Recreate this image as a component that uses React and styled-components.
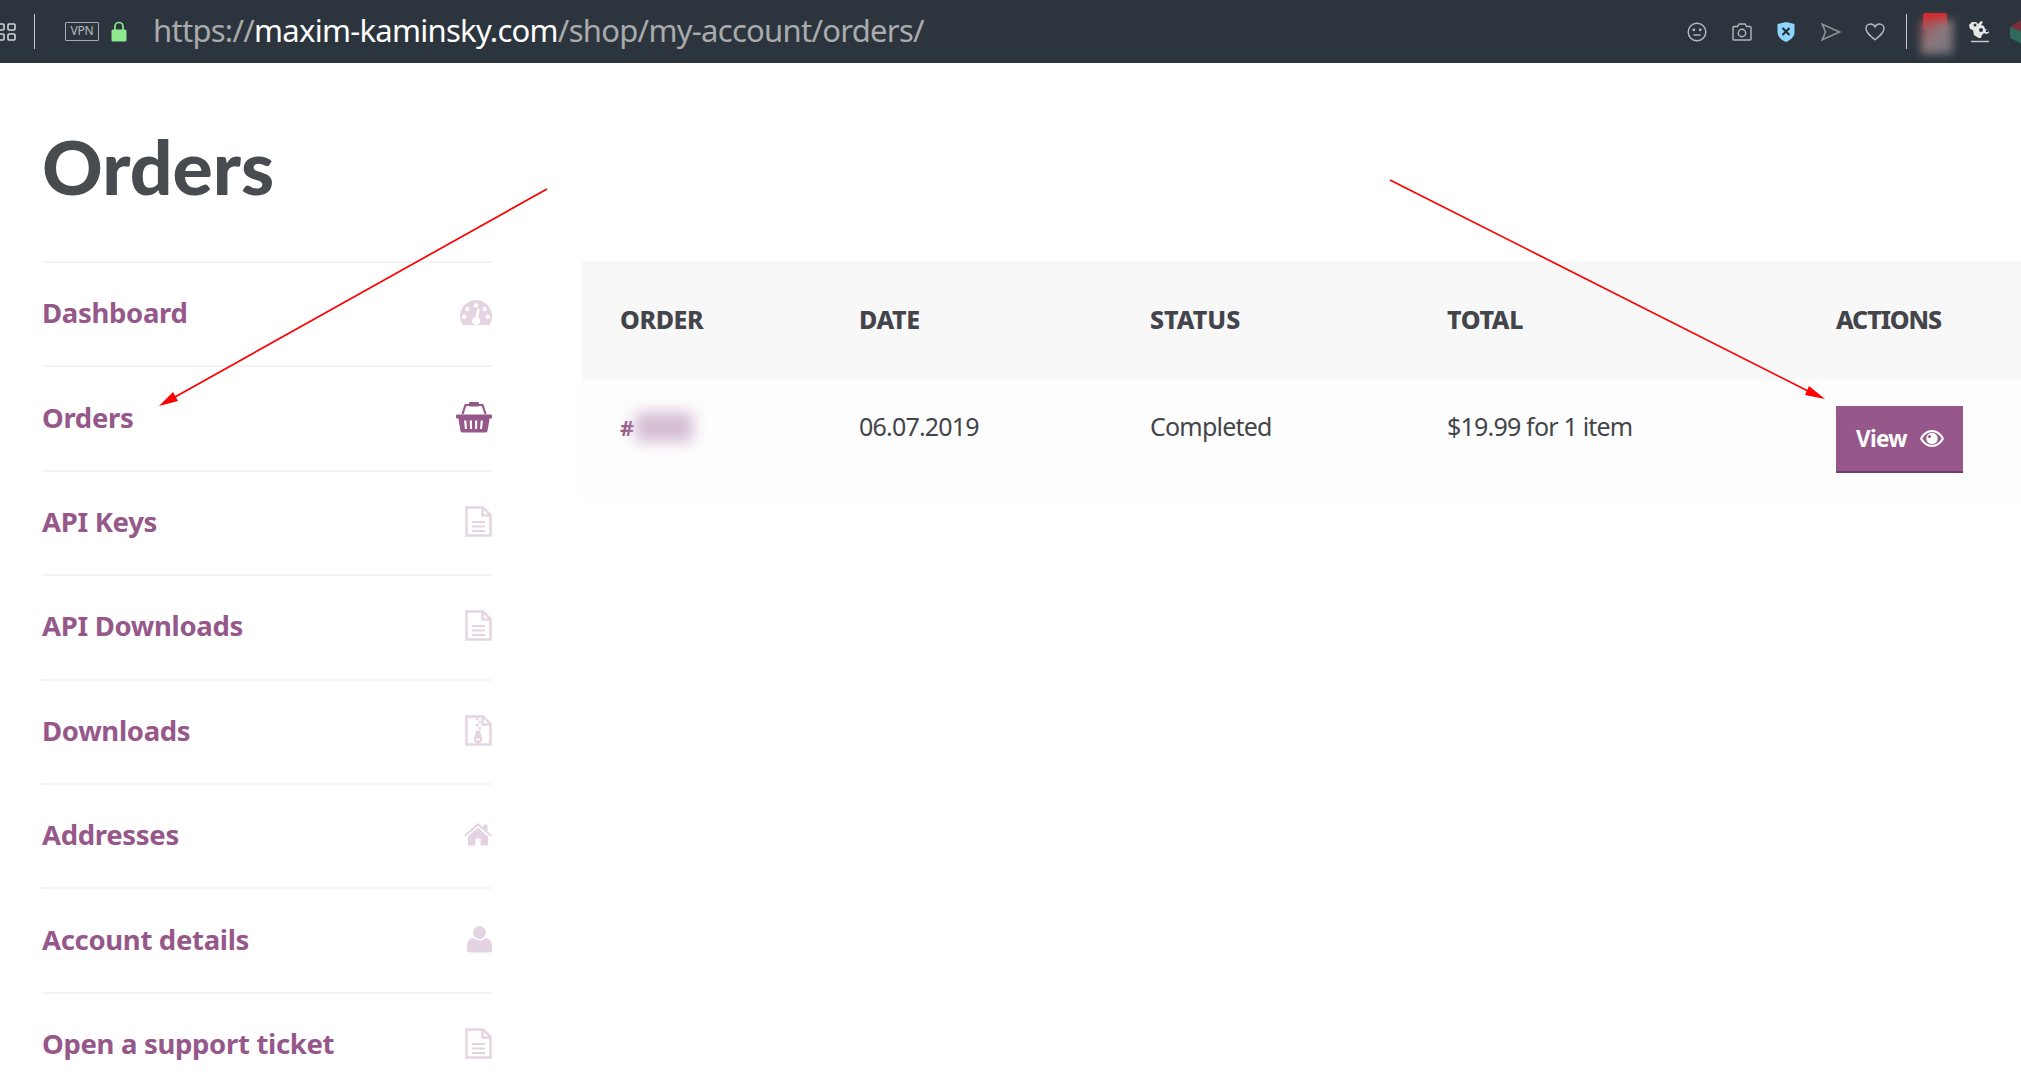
import React from "react";
import styled, { createGlobalStyle } from "styled-components";

const Global = createGlobalStyle`
  html, body { margin: 0; padding: 0; height: 1072px; overflow: hidden; background: #fff; }
  #root { position: relative; height: 1072px; overflow: hidden; }
  * { box-sizing: border-box; }
`;

const Toolbar = styled.header`
  height: 63px; background: #2c353e; display: flex; align-items: center; overflow: hidden;
`;
const LeftGroup = styled.div`
  display: flex; align-items: center; margin-left: -5px;
`;
const Divider = styled.span`
  width: 1px; height: 35px; background: #c8ccd0; flex: none; margin: ${p => p.$m || "0"};
`;
const Url = styled.div`
  font-family: "Noto Sans", sans-serif; font-size: 31px; letter-spacing: -0.72px; color: #a9abad;
  margin-left: 26px; white-space: nowrap; margin-top: -3px;
  b { font-weight: 400; color: #fff; }
`;
const RightGroup = styled.div`
  margin-left: auto; display: flex; align-items: center; margin-right: -21px;
`;
const Slot = styled.span`
  width: ${p => p.$w || 44.5}px; display: flex; justify-content: center; align-items: center; flex: none;
`;
const BlurBadge = styled.span`
  position: relative; width: 34px; height: 36px; display: block; margin: 0 3px 0 14px; flex: none;
`;
const RedTab = styled.span`
  position: absolute; left: 2px; top: -1px; width: 24px; height: 16px; background: #d8282a; border-radius: 2px;
`;
const GreyBlur = styled.span`
  position: absolute; left: 0; top: 6px; width: 32px; height: 34px; filter: blur(4px);
  background: linear-gradient(135deg, #a84a50 0%, #8a7a80 50%, #6e7076 100%);
`;

const Page = styled.main`
  padding: 0 0 0 42px;
`;
const Title = styled.h1`
  font-family: Lato, sans-serif; font-weight: 900; font-size: 75px; line-height: 90px; color: #484c51;
  margin: 0; height: 198px; padding-top: 58px;
`;
const Columns = styled.div`
  display: flex; gap: 90px; align-items: flex-start;
`;
const Nav = styled.nav`
  width: 450px; flex: none;
`;
const NavItem = styled.a`
  display: flex; align-items: center; justify-content: space-between; height: 104.4px;
  border-top: 2px solid #f3f3f3; padding-bottom: 3px;
  font-family: "Noto Sans", sans-serif; font-weight: 700; font-size: 27.5px; letter-spacing: -0.32px; color: #96588a;
  svg { opacity: ${p => (p.$active ? 1 : 0.25)}; display: block; }
`;
const TableWrap = styled.div`
  flex: 1; min-width: 0;
`;
const OrdersTable = styled.table`
  border-collapse: collapse; table-layout: fixed; width: 1439px;
  font-family: "Noto Sans", sans-serif; color: #43454b;
`;
const HeadCell = styled.th`
  background: #f8f8f8; height: 119px; padding: 0 0 3px 38px; text-align: left; width: ${p => p.$w}px;
  font-size: 25px; font-weight: 800; letter-spacing: ${p => p.$ls || "-0.4px"}; text-transform: uppercase;
`;
const BodyCell = styled.td`
  background: #fdfdfd; height: 118px; padding: 0 0 26px 38px; font-size: 25px; letter-spacing: -0.8px;
  vertical-align: middle; white-space: nowrap;
`;
const OrderLink = styled.span`
  color: #96588a; font-weight: 700; display: inline-flex; align-items: center; font-size: 22px;
`;
const Blurred = styled.span`
  display: inline-block; width: 58px; height: 30px; background: #d6bed5; filter: blur(7px); margin-left: 2px;
`;
const ActionCell = styled(BodyCell)`
  padding-bottom: 0; padding-top: 0;
`;
const ViewButton = styled.a`
  display: inline-flex; align-items: center; gap: 13px; width: 127px; height: 67px; background: #96588a;
  border-bottom: 2px solid #6f3f6c; color: #fff; font-weight: 700; font-size: 22.5px; letter-spacing: -0.7px;
  padding: 1px 0 0 20px;
`;
const ArrowLayer = styled.svg`
  position: absolute; left: 0; top: 0; width: 2021px; height: 1072px; pointer-events: none;
`;

const P = "#96588a";
const Doc = () => (
  <svg width="27" height="31" viewBox="0 0 27 31" fill="none">
    <path d="M1.5 1.5H18L25.5 9V29.5H1.5Z" stroke={P} strokeWidth="2.4" />
    <path d="M17.5 2V9.5H25" stroke={P} strokeWidth="2.4" />
    <path d="M7 16H20M7 20.5H20M7 25H20" stroke={P} strokeWidth="2.2" />
  </svg>
);
const Zip = () => (
  <svg width="27" height="31" viewBox="0 0 27 31" fill="none">
    <path d="M1.5 1.5H18L25.5 9V29.5H1.5Z" stroke={P} strokeWidth="2.4" />
    <path d="M17.5 2V9.5H25" stroke={P} strokeWidth="2.4" />
    <path d="M11 3h2.5v2.5H11zM13.500 6h2.500v2.500h-2.500zM11 9h2.500v2.500H11zM13.500 12h2.500v2.500h-2.500z" fill={P} />
    <path fillRule="evenodd" d="M11.500 15.500h3.500L17 23a4.200 4.200 0 1 1-8 0Z M11 23.500h4v2h-4z" fill={P} />
  </svg>
);
const Gauge = () => (
  <svg width="32" height="25" viewBox="0 0 32 25">
    <path fillRule="evenodd" fill={P} d="M16 0a16 16 0 0 1 16 16c0 3.400-.9 6.400-2.400 9H2.400A16 16 0 0 1 0 16 16 16 0 0 1 16 0ZM16 3.200a2.200 2.200 0 1 0 0 4.400 2.200 2.200 0 0 0 0-4.400ZM7.500 6.800a2.200 2.200 0 1 0 0 4.400 2.200 2.200 0 0 0 0-4.400ZM24.500 6.800a2.200 2.200 0 1 0 0 4.400 2.200 2.200 0 0 0 0-4.400ZM4.200 14.500a2.200 2.200 0 1 0 0 4.400 2.200 2.200 0 0 0 0-4.400ZM27.800 14.500a2.200 2.200 0 1 0 0 4.400 2.200 2.200 0 0 0 0-4.400ZM17.800 8.500l2 .4-1.600 8.600a4 4 0 1 1-3 -.4Z" />
  </svg>
);
const Basket = () => (
  <svg width="36" height="32" viewBox="0 0 36 32">
    <path d="M6.500 13 9.500 4H26.500L29.500 13" fill="none" stroke={P} strokeWidth="2.200" />
    <rect x="13" y="1" width="10" height="4.500" rx="1" fill={P} />
    <path fillRule="evenodd" fill={P} d="M1.200 13.500H34.800a1.200 1.200 0 0 1 1.200 1.200v1.600a1.200 1.200 0 0 1-1.200 1.200H33.600L31.500 30a1.800 1.800 0 0 1-1.800 1.400H6.300A1.800 1.800 0 0 1 4.500 30L2.400 17.500H1.200A1.200 1.200 0 0 1 0 16.300v-1.600a1.200 1.200 0 0 1 1.200-1.200ZM8 19.500 9 28h2l-.6-8.500ZM13.700 19.500l.3 8.500h2l-.1-8.500ZM19 19.500 19 28h2l.3-8.500ZM24.700 19.500 24 28h2l1-8.500Z" />
  </svg>
);
const Home = () => (
  <svg width="28" height="23" viewBox="0 0 28 23">
    <path fill={P} d="M14 0 19.500 4.800V1.500H23.500V8.300L28 12.200 26.800 13.700 14 2.700 1.200 13.700 0 12.200ZM14 4.800 24 13.500V22.500H16.500V15.500H11.500V22.500H4V13.500Z" />
  </svg>
);
const User = () => (
  <svg width="25" height="27" viewBox="0 0 25 27">
    <circle cx="12.500" cy="6.500" r="6.500" fill={P} />
    <path fill={P} d="M6.500 12c1.500 1.500 3.700 2.400 6 2.400s4.500-.9 6-2.400C22.500 12.500 25 15 25 20v3.500a3 3 0 0 1-3 3H3a3 3 0 0 1-3-3V20C0 15 2.500 12.500 6.500 12Z" />
  </svg>
);
const Eye = () => (
  <svg width="24" height="17" viewBox="0 0 24 17">
    <path fillRule="evenodd" fill="#fff" d="M12 0c5 0 9.300 3 12 8.500C21.300 14 17 17 12 17S2.700 14 0 8.500C2.700 3 7 0 12 0ZM12 2c-3.700 0-7.300 2.300-9.700 6.500C4.700 12.700 8.300 15 12 15s7.300-2.300 9.700-6.500C19.300 4.300 15.700 2 12 2Z" />
    <path fillRule="evenodd" fill="#fff" d="M12 2.800a5.700 5.700 0 1 1 0 11.400 5.700 5.700 0 0 1 0-11.400ZM9.500 5a1.500 1.500 0 1 0 0 3 1.500 1.500 0 0 0 0-3Z" />
  </svg>
);

const GridIcon = () => (
  <svg width="22" height="20" viewBox="0 0 22 20" fill="none" stroke="#d4d6d8" strokeWidth="1.600">
    <rect x="2" y="2" width="7" height="6" rx="1" /><rect x="13" y="2" width="7" height="6" rx="1" />
    <rect x="2" y="12" width="7" height="6" rx="1" /><rect x="13" y="12" width="7" height="6" rx="1" />
  </svg>
);
const VpnBadge = styled.span`
  width: 34px; height: 19px; border: 1.500px solid #a7abae; border-radius: 1px; color: #b6babd;
  font: 400 12px/16px "Noto Sans", sans-serif; letter-spacing: -0.2px; text-align: center; display: block; flex: none;
  margin: 0 13px 0 30px;
`;
const LockSvg = styled.svg`
  display: block; flex: none; margin-left: -1px;
`;
const Lock = () => (
  <LockSvg width="16" height="21" viewBox="0 0 16 21">
    <path d="M4 9V5.500a4 4 0 0 1 8 0V9" fill="none" stroke="#8ee88e" strokeWidth="1.700" />
    <rect x="0.500" y="8.500" width="15" height="12" rx="1.500" fill="#8ee88e" />
  </LockSvg>
);
const Face = () => (
  <svg width="20" height="20" viewBox="0 0 20 20" fill="none" stroke="#b9bcbe" strokeWidth="1.400">
    <circle cx="10" cy="10" r="8.800" />
    <circle cx="6.800" cy="7.800" r=".7" fill="#b9bcbe" /><circle cx="13.200" cy="7.800" r=".7" fill="#b9bcbe" />
    <path d="M6.500 13H13.500" />
  </svg>
);
const Camera = () => (
  <svg width="20" height="18" viewBox="0 0 20 18" fill="none" stroke="#b4b7b9" strokeWidth="1.400">
    <path d="M1 4.500a1 1 0 0 1 1-1h3.500l1.500-2.500h6l1.500 2.500H18a1 1 0 0 1 1 1V16a1 1 0 0 1-1 1H2a1 1 0 0 1-1-1Z" />
    <circle cx="10" cy="10" r="3.700" />
  </svg>
);
const Shield = () => (
  <svg width="18" height="20" viewBox="0 0 18 20">
    <path d="M9 0 17.500 2V10C17.500 15 13.500 18 9 20 4.500 18 .5 15 .5 10V2Z" fill="#8cd4fb" />
    <path d="M5.500 6 12.500 13M12.500 6 5.500 13" stroke="#1f2a33" strokeWidth="2" />
  </svg>
);
const Send = () => (
  <svg width="20" height="18" viewBox="0 0 20 18" fill="none" stroke="#8d9094" strokeWidth="1.600">
    <path d="M1.200 1.200 18.500 9 1.200 16.800 4.500 9Z" />
  </svg>
);
const Heart = () => (
  <svg width="20" height="18" viewBox="0 0 20 18" fill="none" stroke="#b9bcbe" strokeWidth="1.400">
    <path d="M10 16.800C4 12 1 9.200 1 5.500 1 3 3 1 5.500 1 7.500 1 9 2 10 3.800 11 2 12.500 1 14.500 1 17 1 19 3 19 5.500 19 9.200 16 12 10 16.800Z" />
  </svg>
);
const Ghost = () => (
  <svg width="24" height="23" viewBox="0 0 24 23">
    <path fill="#e6e6e4" d="M4 2h4l2 2 3-3 2 1-2 3 3 1 1 3 3 1 1 3-3 1-2-1-2 2-1 3h-2l-2-1-3-2-1-5-3-1-1-4 2-2Z" />
    <circle cx="7" cy="5" r="1.500" fill="#2c353e" /><circle cx="13" cy="10" r="2" fill="#2c353e" /><circle cx="19" cy="11" r="1.300" fill="#2c353e" />
    <path d="M3 21.500H21" stroke="#c4c6c6" strokeWidth="1.500" />
  </svg>
);
const Cube = () => (
  <svg width="24" height="24" viewBox="0 0 24 24">
    <path d="M0 7 11 0 24 6 12 12Z" fill="#7a2f3a" />
    <path d="M0 7 12 12V24L0 18Z" fill="#2f6a5c" />
    <path d="M12 12 24 6V18L12 24Z" fill="#2f8a5c" />
  </svg>
);

const items = [
  ["Dashboard", <Gauge />],
  ["Orders", <Basket />, true],
  ["API Keys", <Doc />],
  ["API Downloads", <Doc />],
  ["Downloads", <Zip />],
  ["Addresses", <Home />],
  ["Account details", <User />],
  ["Open a support ticket", <Doc />],
];

export default function App() {
  return (
    <>
      <Global />
      <Toolbar>
        <LeftGroup>
          <GridIcon />
          <Divider $m="0 0 0 17px" />
          <VpnBadge>VPN</VpnBadge>
          <Lock />
          <Url>https://<b>maxim-kaminsky.com</b>/shop/my-account/orders/</Url>
        </LeftGroup>
        <RightGroup>
          <Slot><Face /></Slot>
          <Slot><Camera /></Slot>
          <Slot><Shield /></Slot>
          <Slot><Send /></Slot>
          <Slot><Heart /></Slot>
          <Divider $m="0 0 0 8px" />
          <BlurBadge><RedTab /><GreyBlur /></BlurBadge>
          <Slot><Ghost /></Slot>
          <Slot $w={40}><Cube /></Slot>
        </RightGroup>
      </Toolbar>
      <Page>
        <Title>Orders</Title>
        <Columns>
          <Nav>
            {items.map(([label, icon, active]) => (
              <NavItem key={label} $active={active}>{label}{icon}</NavItem>
            ))}
          </Nav>
          <TableWrap>
            <OrdersTable>
              <thead>
                <tr>
                  <HeadCell $w={239}>Order</HeadCell>
                  <HeadCell $w={291}>Date</HeadCell>
                  <HeadCell $w={297} $ls="-0.05px">Status</HeadCell>
                  <HeadCell $w={389}>Total</HeadCell>
                  <HeadCell $w={223} $ls="-1.1px">Actions</HeadCell>
                </tr>
              </thead>
              <tbody>
                <tr>
                  <BodyCell><OrderLink>#<Blurred /></OrderLink></BodyCell>
                  <BodyCell>06.07.2019</BodyCell>
                  <BodyCell>Completed</BodyCell>
                  <BodyCell>$19.99 for 1 item</BodyCell>
                  <ActionCell>
                    <ViewButton>View <Eye /></ViewButton>
                  </ActionCell>
                </tr>
              </tbody>
            </OrdersTable>
          </TableWrap>
        </Columns>
      </Page>
      <ArrowLayer viewBox="0 0 2021 1072">
        <path d="M547 189 175 397" stroke="#f00" strokeWidth="1.700" />
        <path d="M159 406 178 401 173 392Z" fill="#f00" />
        <path d="M1390 180 1808 391" stroke="#f00" strokeWidth="1.700" />
        <path d="M1825 399 1805 395 1809 386Z" fill="#f00" />
      </ArrowLayer>
    </>
  );
}
